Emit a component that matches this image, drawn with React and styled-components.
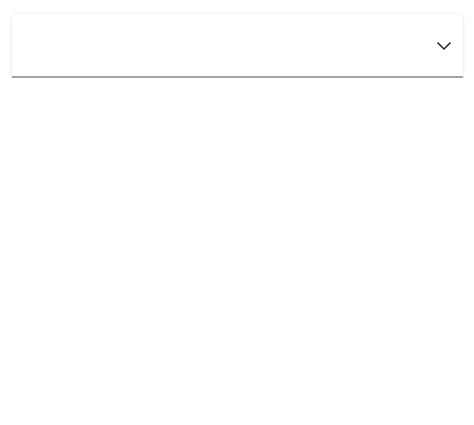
import React from 'react';
import styled, { createGlobalStyle } from 'styled-components';

const GlobalStyle = createGlobalStyle`
  body {
    margin: 0;
    background: #fff;
    font-family: Roboto, "Liberation Sans", sans-serif;
  }
`;

const Page = styled.div`
  padding: 14px 11px 0 12px;
`;

const SelectBox = styled.div`
  display: flex;
  align-items: center;
  justify-content: flex-end;
  height: 62px;
  padding: 0 11px 0 12px;
  background: #fff;
  border-radius: 4px 4px 0 0;
  border-bottom: 2px solid #a2a2a2;
  box-shadow: 0 0 3px rgba(0, 0, 0, 0.1), 0 2px 2px rgba(0, 0, 0, 0.1);
  cursor: pointer;
`;

const Chevron = styled.svg`
  width: 16px;
  height: 10px;
  margin-top: 1px;
`;

export default function App() {
  return (
    <>
      <GlobalStyle />
      <Page>
        <SelectBox>
          <Chevron viewBox="0 0 16 10">
            <path d="M1.5 1.5 L8 8 L14.5 1.5" fill="none" stroke="#222" strokeWidth="1.5" />
          </Chevron>
        </SelectBox>
      </Page>
    </>
  );
}
